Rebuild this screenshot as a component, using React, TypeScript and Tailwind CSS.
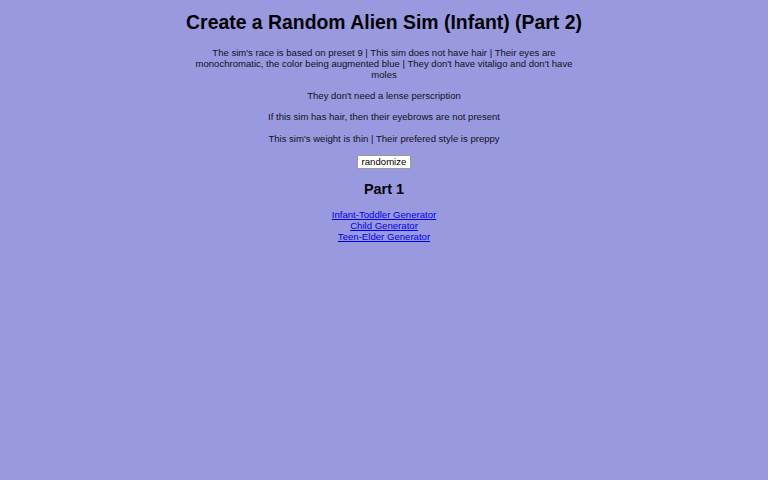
export default function App() {
  return (
    <div
      className="min-h-[480px] w-full bg-[#9999e0] text-black"
      style={{ fontFamily: '"Liberation Sans", Arial, sans-serif' }}
    >
      <div className="flex flex-col items-center pt-[11px]">
        <h1 className="text-[19.4px] font-bold leading-[23px]">
          Create a Random Alien Sim (Infant) (Part 2)
        </h1>
        <div className="mt-[13px] w-[384px] text-center text-[9.55px] leading-[11px] text-[#111122]">
          <p>
            The sim's race is based on preset 9 | This sim does not have hair | Their eyes are
            monochromatic, the color being augmented blue | They don't have vitaligo and don't have
            moles
          </p>
          <p className="mt-[10px]">They don't need a lense perscription</p>
          <p className="mt-[10px]">If this sim has hair, then their eyebrows are not present</p>
          <p className="mt-[11px]">This sim's weight is thin | Their prefered style is preppy</p>
        </div>
        <button className="mt-[11px] h-[14px] border border-[#9a9a9a] bg-white px-[4px] text-[9.6px] leading-[12px] text-black">
          randomize
        </button>
        <h2 className="mt-[12px] text-[14.4px] font-bold leading-[17px]">Part 1</h2>
        <div className="mt-[11px] flex flex-col items-center text-[9.6px] leading-[11px]">
          <a href="#" className="text-[#0000ee] underline">Infant-Toddler Generator</a>
          <a href="#" className="text-[#0000ee] underline">Child Generator</a>
          <a href="#" className="text-[#0000ee] underline">Teen-Elder Generator</a>
        </div>
      </div>
    </div>
  );
}
